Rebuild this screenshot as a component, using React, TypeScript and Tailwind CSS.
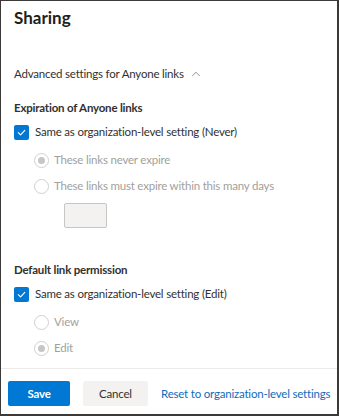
import { ChevronUp } from "lucide-react";

function Checkbox({ label }: { label: string }) {
  return (
    <div className="flex items-center gap-[6px] h-[20px]">
      <span className="w-[15px] h-[15px] rounded-[2px] bg-[#0078d4] flex items-center justify-center shrink-0">
        <svg width="11" height="11" viewBox="0 0 12 12" fill="none">
          <path d="M2.5 6.2 L5 8.6 L9.6 3.6" stroke="white" strokeWidth="1.2" strokeLinecap="round" strokeLinejoin="round" />
        </svg>
      </span>
      <span className="text-[#323130]">{label}</span>
    </div>
  );
}

function Radio({ label, checked }: { label: string; checked?: boolean }) {
  return (
    <div className="flex items-center gap-[5px] h-[20px]">
      <span className="w-[15px] h-[15px] rounded-full border border-[#d2d0ce] flex items-center justify-center shrink-0">
        {checked && <span className="w-[7px] h-[7px] rounded-full bg-[#c8c6c4]" />}
      </span>
      <span className="text-[#a19f9d]">{label}</span>
    </div>
  );
}

export default function App() {
  return (
    <div
      className="w-[339px] h-[416px] bg-white border border-[#3b3a39] border-b-2 border-r-2 flex flex-col text-[11.5px] tracking-[-0.2px] overflow-hidden"
      style={{ fontFamily: 'Lato, "Noto Sans", sans-serif' }}
    >
      <div className="flex-1 px-[13px]">
        <h1 className="text-[17px] font-bold text-[#201f1e] mt-[5px] leading-[24px] tracking-normal">Sharing</h1>

        <button className="flex items-center gap-[5px] mt-[36px] text-[#323130] leading-[16px]">
          Advanced settings for Anyone links
          <ChevronUp size={14} strokeWidth={1.2} className="text-[#605e5c]" />
        </button>

        <h2 className="font-bold text-[#323130] mt-[18px] leading-[16px]">Expiration of Anyone links</h2>
        <div className="mt-[6px]">
          <Checkbox label="Same as organization-level setting (Never)" />
        </div>
        <div className="pl-[20px] mt-[8px] flex flex-col gap-[6px]">
          <Radio label="These links never expire" checked />
          <Radio label="These links must expire within this many days" />
        </div>
        <div className="pl-[50px] mt-[7px]">
          <div className="w-[43px] h-[25px] bg-[#f3f2f1] border border-[#c8c6c4] rounded-[2px]" />
        </div>

        <h2 className="font-bold text-[#323130] mt-[34px] leading-[16px]">Default link permission</h2>
        <div className="mt-[6px]">
          <Checkbox label="Same as organization-level setting (Edit)" />
        </div>
        <div className="pl-[20px] mt-[8px] flex flex-col gap-[6px]">
          <Radio label="View" />
          <Radio label="Edit" checked />
        </div>
      </div>

      <div className="border-t border-[#edebe9] flex items-center gap-[13px] px-[7px] pt-[12px] pb-[8px]">
        <button className="w-[62px] h-[25px] shrink-0 bg-[#0078d4] text-white font-bold rounded-[2px]">Save</button>
        <button className="w-[65px] h-[25px] shrink-0 bg-[#f3f2f1] text-[#323130] rounded-[2px]">Cancel</button>
        <a className="text-[#0f6cbd] whitespace-nowrap">Reset to organization-level settings</a>
      </div>
    </div>
  );
}
